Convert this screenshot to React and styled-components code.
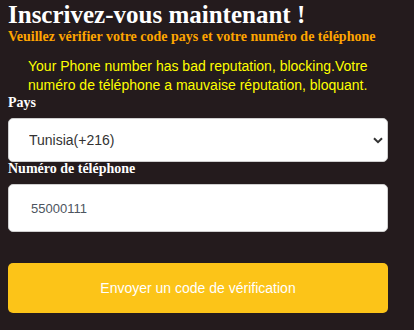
import React, { useState } from 'react';
import styled, { createGlobalStyle } from 'styled-components';

const GlobalStyle = createGlobalStyle`
  html, body {
    margin: 0;
    padding: 0;
    background: #241b1d;
  }
  * {
    box-sizing: border-box;
  }
`;

const Page = styled.div`
  min-height: 330px;
  padding: 1px 8px 0;
  background: #241b1d;
  font-family: "Liberation Serif", "Times New Roman", serif;
`;

const Form = styled.form`
  width: 380px;
  display: flex;
  flex-direction: column;
`;

const Title = styled.h1`
  margin: 0;
  font-size: 25px;
  line-height: 28px;
  font-weight: bold;
  color: #ffffff;
`;

const Subtitle = styled.h2`
  margin: 0;
  font-size: 14px;
  line-height: 16px;
  font-weight: bold;
  color: #ffa500;
`;

const Alert = styled.p`
  margin: 12px 0 1px;
  padding: 0 20px;
  font-family: "Liberation Sans", Arial, sans-serif;
  font-size: 14px;
  line-height: 19px;
  color: #ffff00;
  text-align: left;
`;

const Label = styled.label`
  display: block;
  margin-bottom: 9px;
  font-size: 14px;
  line-height: 13px;
  font-weight: bold;
  color: #ffffff;
`;

const SelectWrap = styled.div`
  position: relative;
`;

const Select = styled.select`
  appearance: none;
  width: 100%;
  height: 44px;
  padding: 0 0 0 20px;
  border: 1px solid #cfcfcf;
  border-radius: 5px;
  background: #ffffff;
  font-family: "Liberation Sans", Arial, sans-serif;
  font-size: 14px;
  color: #333333;
  outline: none;
`;

const Chevron = styled.svg`
  position: absolute;
  right: 5px;
  top: 50%;
  margin-top: -3px;
  pointer-events: none;
`;

const Input = styled.input`
  width: 100%;
  height: 48px;
  padding: 0 0 0 22px;
  border: 1px solid #cfcfcf;
  border-radius: 5px;
  background: #ffffff;
  font-family: "Liberation Sans", Arial, sans-serif;
  font-size: 13px;
  color: #4d5560;
  outline: none;
`;

const Submit = styled.button`
  width: 100%;
  height: 50px;
  margin-top: 31px;
  border: none;
  border-radius: 5px;
  background: #fcc418;
  font-family: "Liberation Sans", Arial, sans-serif;
  font-size: 14px;
  color: #ffffff;
  cursor: pointer;
`;

const App = () => {
  const [country, setCountry] = useState('216');
  const [phone, setPhone] = useState('55000111');

  return (
    <Page>
      <GlobalStyle />
      <Form onSubmit={(e) => e.preventDefault()}>
        <Title>Inscrivez-vous maintenant !</Title>
        <Subtitle>Veuillez vérifier votre code pays et votre numéro de téléphone</Subtitle>
        <Alert>
          Your Phone number has bad reputation, blocking.Votre numéro de téléphone a mauvaise réputation, bloquant.
        </Alert>
        <Label htmlFor="country">Pays</Label>
        <SelectWrap>
          <Select id="country" value={country} onChange={(e) => setCountry(e.target.value)}>
            <option value="216">Tunisia(+216)</option>
            <option value="33">France(+33)</option>
            <option value="213">Algeria(+213)</option>
          </Select>
          <Chevron width="10" height="7" viewBox="0 0 10 7">
            <path d="M1 1.2 L5 5.2 L9 1.2" fill="none" stroke="#333" strokeWidth="2" />
          </Chevron>
        </SelectWrap>
        <Label htmlFor="phone">Numéro de téléphone</Label>
        <Input id="phone" type="tel" value={phone} onChange={(e) => setPhone(e.target.value)} />
        <Submit type="submit">Envoyer un code de vérification</Submit>
      </Form>
    </Page>
  );
};

export default App;
